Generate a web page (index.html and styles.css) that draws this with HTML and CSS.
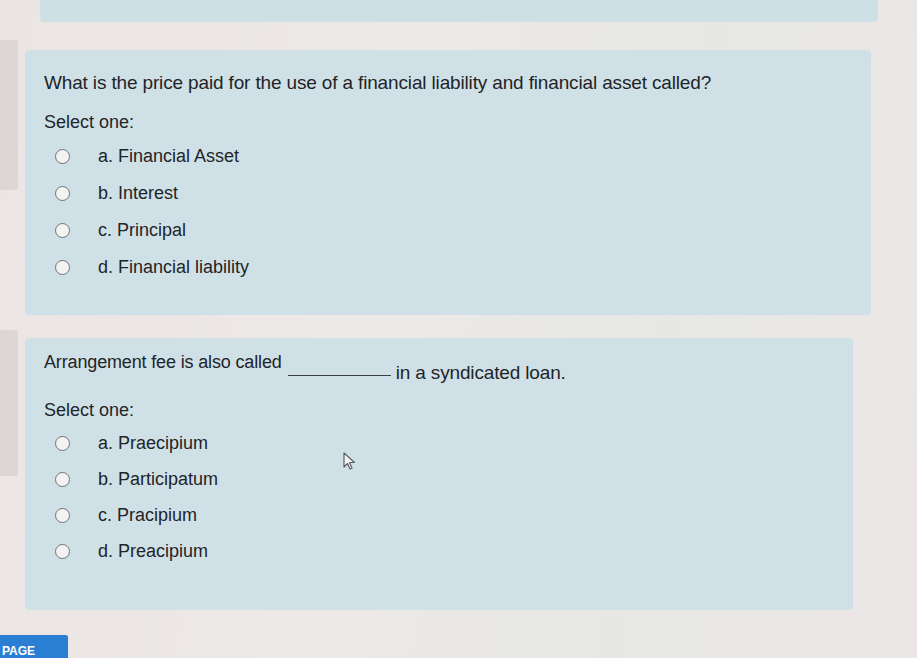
FILE: index.html
```html
<!DOCTYPE html>
<html>
<head>
<meta charset="utf-8">
<link rel="stylesheet" href="styles.css">
</head>
<body>
<div class="page">
  <div class="card card-top"></div>

  <div class="qrow q1">
    <div class="info"></div>
    <div class="card card-q1">
      <div class="qtext">What is the price paid for the use of a financial liability and financial asset called?</div>
      <div class="prompt">Select one:</div>
      <div class="answers">
        <div class="opt"><span class="radio"></span><span class="label">a. Financial Asset</span></div>
        <div class="opt"><span class="radio"></span><span class="label">b. Interest</span></div>
        <div class="opt"><span class="radio"></span><span class="label">c. Principal</span></div>
        <div class="opt"><span class="radio"></span><span class="label">d. Financial liability</span></div>
      </div>
    </div>
  </div>

  <div class="qrow q2">
    <div class="info"></div>
    <div class="card card-q2">
      <div class="qtext gap">
        <span class="part1">Arrangement fee is also called</span>
        <span class="blank"></span>
        <span class="part2">in a syndicated loan.</span>
      </div>
      <div class="prompt">Select one:</div>
      <div class="answers tight">
        <div class="opt"><span class="radio"></span><span class="label">a. Praecipium</span></div>
        <div class="opt"><span class="radio"></span><span class="label">b. Participatum</span></div>
        <div class="opt"><span class="radio"></span><span class="label">c. Pracipium</span></div>
        <div class="opt"><span class="radio"></span><span class="label">d. Preacipium</span></div>
      </div>
      <svg class="cursor" width="14" height="20" viewBox="0 0 14 20">
        <path d="M1 1 L1 15 L4.5 11.5 L7 17 L9 16 L6.5 10.5 L11.5 10.5 Z" fill="#f4f6f6" stroke="#5b5f63" stroke-width="1.2" stroke-linejoin="round"/>
      </svg>
    </div>
  </div>

  <div class="navbar">
    <div class="navbtn">PAGE</div>
  </div>
</div>
</body>
</html>
```
FILE: styles.css
```css
html, body {
  margin: 0;
  padding: 0;
}
body {
  width: 917px;
  height: 658px;
  overflow: hidden;
  background: linear-gradient(100deg, #ebe5e4 0%, #ede9e7 40%, #e7e8e6 70%, #ece7e6 100%);
  font-family: "Liberation Sans", Arial, Helvetica, sans-serif;
  color: #1f2428;
}
.page {
  display: flex;
  flex-direction: column;
  height: 658px;
}
.card {
  background: #cfe1e6;
  border-radius: 4px;
}
.card-top {
  height: 22px;
  margin-left: 40px;
  width: 838px;
  border-radius: 0 0 4px 4px;
  background: #cde0e5;
}
.qrow {
  display: flex;
  align-items: flex-start;
}
.q1 {
  margin-top: 28px;
}
.q2 {
  margin-top: 23px;
}
.info {
  width: 18px;
  height: 150px;
  margin-top: -10px;
  background: #dcd6d4;
  border-radius: 0 3px 3px 0;
  flex: none;
}
.q2 .info {
  height: 146px;
  margin-top: -8px;
}
.card-q1 {
  margin-left: 7px;
  width: 846px;
  height: 265px;
  box-sizing: border-box;
  padding: 22px 0 0 19px;
}
.card-q2 {
  margin-left: 7px;
  width: 828px;
  height: 272px;
  box-sizing: border-box;
  padding: 13px 0 0 19px;
  position: relative;
}
.qtext {
  font-size: 19px;
  line-height: 22px;
  letter-spacing: -0.15px;
}
.prompt {
  font-size: 18px;
  line-height: 20px;
  margin-top: 18px;
}
.gap {
  display: flex;
  align-items: flex-start;
  font-size: 18px;
}
.blank {
  display: inline-block;
  width: 103px;
  height: 24px;
  border-bottom: 1px solid #3a3f43;
  margin: 0 4px 0 6px;
  flex: none;
}
.part2 {
  margin-top: 11px;
  margin-left: 1px;
  font-size: 19px;
}
.q2 .prompt {
  margin-top: 16px;
}
.answers {
  display: flex;
  flex-direction: column;
  margin-top: 6px;
  padding-left: 11px;
}
.opt {
  display: flex;
  align-items: center;
  height: 37px;
}
.tight .opt {
  height: 36px;
}
.tight {
  margin-top: 5px;
}
.radio {
  width: 13px;
  height: 13px;
  border: 1.5px solid #6e7377;
  border-radius: 50%;
  background: #f3f3f2;
  flex: none;
}
.label {
  font-size: 18px;
  margin-left: 28px;
}
.cursor {
  position: absolute;
  left: 318px;
  top: 114px;
}
.navbar {
  margin-top: auto;
}
.navbtn {
  width: 68px;
  height: 23px;
  background: #2b7fd3;
  color: #ffffff;
  font-size: 12px;
  font-weight: bold;
  line-height: 14px;
  padding-top: 9px;
  box-sizing: border-box;
  overflow: hidden;
  text-indent: 2px;
  border-radius: 0 2px 0 0;
}
```
